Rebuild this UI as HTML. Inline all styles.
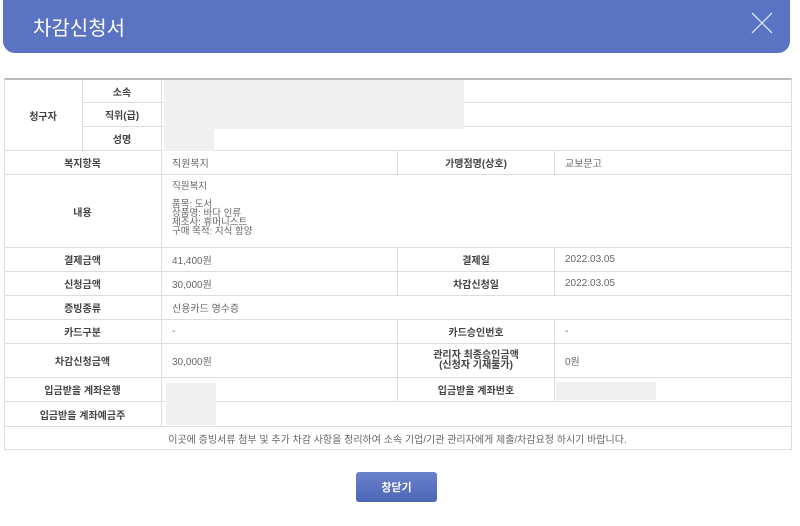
<!DOCTYPE html>
<html><head><meta charset="utf-8"><style>
*{margin:0;padding:0;box-sizing:border-box}
body{width:800px;height:526px;background:#fff;position:relative;overflow:hidden;font-family:"Liberation Sans","Noto Sans CJK KR",sans-serif;font-size:10px;color:#555}
.hd{position:absolute;left:3px;top:0;width:787px;height:53px;background:#5a73c3;border-radius:0 0 12px 12px}
.hd h1{position:absolute;left:30px;top:12px;color:#fff;font-size:20px;font-weight:normal;font-family:"Noto Sans CJK KR",sans-serif}
.c{position:absolute;display:flex;align-items:center;border-right:1px solid #ddd;border-bottom:1px solid #ddd}
.l{justify-content:center;font-weight:bold;color:#444}
.v{padding-left:10px;color:#666}
.g{position:absolute;background:#f0f0f0}
</style></head><body>
<div class="hd"><h1>차감신청서</h1>
<svg style="position:absolute;left:748px;top:12px" width="22" height="22"><path d="M1 1L21 21M21 1L1 21" stroke="#dfe5f5" stroke-width="1.3"/></svg></div>
<div style="position:absolute;left:4px;top:78px;width:788px;height:372px;border:1px solid #ddd;border-top:2px solid #bbb"></div>
<div class="c l" style="left:4px;top:80px;width:79px;height:71px">청구자</div>
<div class="c l" style="left:83px;top:80px;width:79px;height:23px">소속</div>
<div class="c l" style="left:83px;top:103px;width:79px;height:24px">직위(급)</div>
<div class="c l" style="left:83px;top:127px;width:79px;height:24px">성명</div>
<div class="c" style="left:162px;top:80px;width:630px;height:23px"></div>
<div class="c" style="left:162px;top:103px;width:630px;height:24px"></div>
<div class="c" style="left:162px;top:127px;width:630px;height:24px"></div>
<div class="g" style="left:164px;top:80px;width:300px;height:49px"></div>
<div class="g" style="left:164px;top:129px;width:50px;height:22px"></div>
<div class="c l" style="left:4px;top:151px;width:158px;height:24px">복지항목</div>
<div class="c v" style="left:162px;top:151px;width:236px;height:24px">직원복지</div>
<div class="c l" style="left:398px;top:151px;width:157px;height:24px">가맹점명(상호)</div>
<div class="c v" style="left:555px;top:151px;width:237px;height:24px">교보문고</div>
<div class="c l" style="left:4px;top:175px;width:158px;height:73px">내용</div>
<div class="c v" style="left:162px;top:175px;width:630px;height:73px;align-items:flex-start;line-height:9px;padding-top:7px;font-size:9.5px">직원복지<br><br>품목: 도서<br>상품명: 바다 인류<br>제조사: 휴머니스트<br>구매 목적: 지식 함양</div>
<div class="c l" style="left:4px;top:248px;width:158px;height:24px">결제금액</div>
<div class="c v" style="left:162px;top:248px;width:236px;height:24px">41,400원</div>
<div class="c l" style="left:398px;top:248px;width:157px;height:24px">결제일</div>
<div class="c v" style="left:555px;top:248px;width:237px;height:24px">2022.03.05</div>
<div class="c l" style="left:4px;top:272px;width:158px;height:24px">신청금액</div>
<div class="c v" style="left:162px;top:272px;width:236px;height:24px">30,000원</div>
<div class="c l" style="left:398px;top:272px;width:157px;height:24px">차감신청일</div>
<div class="c v" style="left:555px;top:272px;width:237px;height:24px">2022.03.05</div>
<div class="c l" style="left:4px;top:296px;width:158px;height:24px">증빙종류</div>
<div class="c v" style="left:162px;top:296px;width:630px;height:24px">신용카드 영수증</div>
<div class="c l" style="left:4px;top:320px;width:158px;height:24px">카드구분</div>
<div class="c v" style="left:162px;top:320px;width:236px;height:24px">-</div>
<div class="c l" style="left:398px;top:320px;width:157px;height:24px">카드승인번호</div>
<div class="c v" style="left:555px;top:320px;width:237px;height:24px">-</div>
<div class="c l" style="left:4px;top:344px;width:158px;height:34px">차감신청금액</div>
<div class="c v" style="left:162px;top:344px;width:236px;height:34px">30,000원</div>
<div class="c l" style="left:398px;top:344px;width:157px;height:34px;text-align:center;line-height:10px">관리자 최종승인금액<br>(신청자 기재불가)</div>
<div class="c v" style="left:555px;top:344px;width:237px;height:34px">0원</div>
<div class="c l" style="left:4px;top:378px;width:158px;height:24px">입금받을 계좌은행</div>
<div class="c v" style="left:162px;top:378px;width:236px;height:24px"></div>
<div class="c l" style="left:398px;top:378px;width:157px;height:24px">입금받을 계좌번호</div>
<div class="c v" style="left:555px;top:378px;width:237px;height:24px"></div>
<div class="g" style="left:556px;top:382px;width:100px;height:18px"></div>
<div class="c l" style="left:4px;top:402px;width:158px;height:25px">입금받을 계좌예금주</div>
<div class="c v" style="left:162px;top:402px;width:630px;height:25px"></div>
<div class="g" style="left:166px;top:383px;width:50px;height:42px"></div>
<div class="c" style="left:4px;top:427px;width:788px;height:23px;justify-content:center;color:#666">이곳에 증빙서류 첨부 및 추가 차감 사항을 정리하여 소속 기업/기관 관리자에게 제출/차감요청 하시기 바랍니다.</div>
<div style="position:absolute;left:356px;top:472px;width:81px;height:30px;background:linear-gradient(#6a82cc,#4d66b5);border-radius:3px;color:#fff;font-weight:bold;font-size:11px;display:flex;align-items:center;justify-content:center">창닫기</div>
</body></html>
